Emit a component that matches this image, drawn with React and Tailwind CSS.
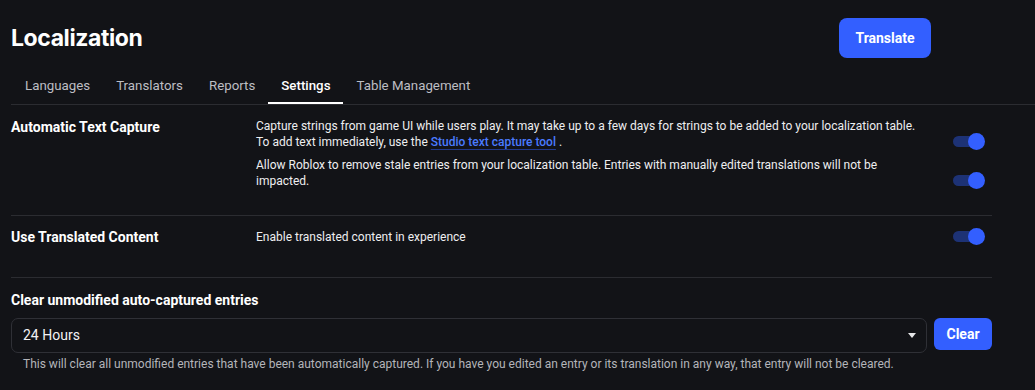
import React from "react";

const tabs = ["Languages", "Translators", "Reports", "Settings", "Table Management"];

function Toggle() {
  return (
    <div className="relative w-[32px] h-[17px] flex items-center shrink-0">
      <div className="w-[30px] h-[11px] rounded-full bg-[#1d3275]" />
      <div className="absolute right-0 top-0 w-[17px] h-[17px] rounded-full bg-[#335fff]" />
    </div>
  );
}

function SettingLine({ children }) {
  return (
    <div className="flex items-end justify-between">
      <p className="w-[668px] text-[12px] leading-[16px] text-[#eeeef0]">{children}</p>
      <div className="mr-[7px]">
        <Toggle />
      </div>
    </div>
  );
}

export default function App() {
  return (
    <div
      className="w-[1035px] h-[390px] bg-[#121317] text-white overflow-hidden"
      style={{ fontFamily: "Roboto, 'Noto Sans', sans-serif" }}
    >
      {/* Header */}
      <div className="flex items-center justify-between pl-[11px] pr-[104px] pt-[18px]">
        <h1
          className="text-[23px] font-bold tracking-[-0.4px] leading-[40px]"
          style={{ fontFamily: "Inter, sans-serif" }}
        >
          Localization
        </h1>
        <button className="w-[92px] h-[40px] rounded-[8px] bg-[#335fff] text-[14px] font-bold text-white">
          Translate
        </button>
      </div>

      {/* Tabs */}
      <div className="ml-[11px] mt-[8px] flex border-b border-[#2b2c31]">
        {tabs.map((t, i) => (
          <div
            key={t}
            className={`px-[13px] h-[38px] pt-[3px] flex items-center text-[13.3px] border-b-2 ${
              i === 0 ? "ml-px" : ""
            } ${
              t === "Settings"
                ? "border-white text-white font-medium"
                : "border-transparent text-[#bdbec3]"
            }`}
          >
            {t}
          </div>
        ))}
      </div>

      <div className="pl-[11px] pr-[43px]">
        {/* Automatic Text Capture */}
        <div className="flex pt-[13px] pb-[26px] border-b border-[#2b2c31]">
          <div className="w-[245px] text-[14px] font-bold leading-[18px] shrink-0">
            Automatic Text Capture
          </div>
          <div className="flex-1 flex flex-col gap-[7px]">
            <SettingLine>
              Capture strings from game UI while users play. It may take up to a few days for strings to be added to your localization table. To add text immediately, use the{" "}
              <a className="text-[#4a7bff] font-medium underline decoration-[#22398a] underline-offset-[3px]">
                Studio text capture tool
              </a>{" "}
              .
            </SettingLine>
            <SettingLine>
              Allow Roblox to remove stale entries from your localization table. Entries with manually edited translations will not be impacted.
            </SettingLine>
          </div>
        </div>

        {/* Use Translated Content */}
        <div className="flex pt-[12px] pb-[31px] border-b border-[#2b2c31]">
          <div className="w-[245px] text-[14px] font-bold leading-[18px] shrink-0">
            Use Translated Content
          </div>
          <div className="flex-1">
            <SettingLine>Enable translated content in experience</SettingLine>
          </div>
        </div>

        {/* Clear entries */}
        <div className="pt-[12px]">
          <div className="text-[14px] font-bold leading-[20px]">
            Clear unmodified auto-captured entries
          </div>
          <div className="flex items-start gap-[7px] mt-[8px]">
            <div className="flex-1 h-[35px] rounded-[7px] border border-[#2f3036] flex items-center justify-between pl-[11px] pr-[10px]">
              <span className="text-[14px] text-[#f2f2f4]">24 Hours</span>
              <svg width="8" height="5" viewBox="0 0 8 5">
                <path d="M0 0 L8 0 L4 5 Z" fill="#e6e6e8" />
              </svg>
            </div>
            <button className="w-[58px] h-[32px] rounded-[6px] bg-[#335fff] text-[14px] font-bold text-white">
              Clear
            </button>
          </div>
          <p className="mt-[3px] pl-[12px] text-[12px] leading-[16px] text-[#b4b5ba]">
            This will clear all unmodified entries that have been automatically captured. If you have you edited an entry or its translation in any way, that entry will not be cleared.
          </p>
        </div>
      </div>
    </div>
  );
}
